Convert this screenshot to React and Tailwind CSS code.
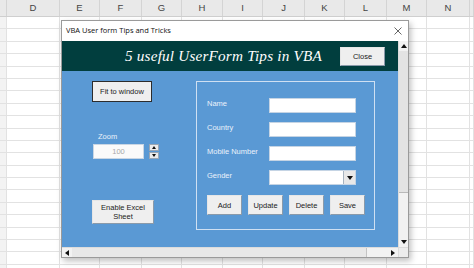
const cols = [
  { key: '', w: 'w-[7px]' },
  { key: 'D', w: 'w-[53px]' },
  { key: 'E', w: 'w-[40px]' },
  { key: 'F', w: 'w-[42px]' },
  { key: 'G', w: 'w-[40px]' },
  { key: 'H', w: 'w-[41px]' },
  { key: 'I', w: 'w-[40px]' },
  { key: 'J', w: 'w-[42px]' },
  { key: 'K', w: 'w-[40px]' },
  { key: 'L', w: 'w-[42px]' },
  { key: 'M', w: 'w-[40px]' },
  { key: 'N', w: 'w-[43px]' },
  { key: ' ', w: 'w-[4px]' },
]

const rows = Array.from({ length: 21 }, (_, i) => i)

const fields = ['Name', 'Country', 'Mobile Number', 'Gender']

export default function App() {
  return (
    <div className="relative w-[474px] h-[268px] overflow-hidden bg-white" style={{ fontFamily: '"Liberation Sans", Arial, sans-serif' }}>
      <Sheet />
      <UserForm />
    </div>
  )
}

function Sheet() {
  return (
    <div className="flex flex-col">
      <div className="flex h-[17px] bg-[#e9e9e9] border-b border-[#cfcfcf]">
        {cols.map((c, i) => (
          <div key={i} className={`${c.w} shrink-0 border-r border-[#d4d4d4] flex items-center justify-center text-[9.5px] text-[#444]`}>
            {c.key}
          </div>
        ))}
      </div>
      {rows.map((r) => (
        <div key={r} className="flex h-[12.4px] shrink-0">
          {cols.map((c, i) => (
            <div key={i} className={`${c.w} shrink-0 border-r border-b border-[#e2e2e2] ${i === 0 ? 'bg-[#f3f3f3]' : ''}`} />
          ))}
        </div>
      ))}
    </div>
  )
}

function WinButton({ children, className = '' }) {
  return (
    <div className={`flex items-center justify-center text-center bg-[#efefef] border border-[#e6e6e6] border-r-[#8a9aaa] border-b-[#8a9aaa] text-[7.5px] leading-[9px] text-[#222] ${className}`}>
      {children}
    </div>
  )
}

function Arrow({ dir }) {
  const pts = {
    up: '0,4 3,0 6,4',
    down: '0,0 3,4 6,0',
    left: '4,0 0,3 4,6',
    right: '0,0 4,3 0,6',
  }
  const horiz = dir === 'left' || dir === 'right'
  return (
    <svg width={horiz ? 4 : 6} height={horiz ? 6 : 4} viewBox={horiz ? '0 0 4 6' : '0 0 6 4'}>
      <polygon points={pts[dir]} fill="#111" />
    </svg>
  )
}

function UserForm() {
  return (
    <div className="absolute left-[61px] top-[20px] w-[348px] h-[238px] bg-[#f0f0f0] border border-[#9a9a9a] shadow-[2px_3px_6px_rgba(0,0,0,0.25)] flex flex-col">
      <div className="h-[20px] shrink-0 bg-white flex items-center justify-between pl-[4px] pr-[6px]">
        <span className="text-[7.5px] text-[#111]" style={{ fontFamily: '"Open Sans", "Liberation Sans", sans-serif' }}>VBA User form Tips and Tricks</span>
        <svg width="8" height="8" viewBox="0 0 8 8">
          <path d="M0.5 0.5 L7.5 7.5 M7.5 0.5 L0.5 7.5" stroke="#555" strokeWidth="0.9" />
        </svg>
      </div>
      <div className="flex flex-1 min-h-0">
        <div className="flex-1 flex flex-col bg-[#5a99d4] min-w-0">
          <div className="h-[30px] shrink-0 bg-[#013e3e] flex items-center">
            <span className="pl-[63px] text-[15.2px] italic text-white tracking-[0.2px]" style={{ fontFamily: '"Liberation Serif", "Times New Roman", serif' }}>
              5 useful UserForm Tips in VBA
            </span>
            <WinButton className="ml-auto mr-[13px] w-[45px] h-[19px]">Close</WinButton>
          </div>
          <div className="flex-1 flex pt-[10px]">
            <div className="w-[134px] shrink-0 flex flex-col pl-[30px]">
              <div className="w-[60px] h-[21px] border border-[#2c2c2c] bg-[#efefef] flex items-center justify-center text-[7.5px] text-[#222]">
                Fit to window
              </div>
              <span className="mt-[30px] ml-[6px] text-[7.5px] leading-[9px] text-[#e9f1fa]">Zoom</span>
              <div className="mt-[3px] ml-[1px] flex items-center gap-[5px]">
                <div className="w-[51px] h-[15px] bg-[#fafafa] border border-[#c9d6e4] flex items-center justify-center text-[7.5px] text-[#a8a8a8]">
                  100
                </div>
                <div className="w-[10px] h-[15px] flex flex-col gap-[1px]">
                  <div className="flex-1 bg-[#ececec] border border-[#9aa7b5] flex items-center justify-center">
                    <svg width="4" height="3" viewBox="0 0 4 3"><polygon points="0,3 2,0 4,3" fill="#111" /></svg>
                  </div>
                  <div className="flex-1 bg-[#ececec] border border-[#9aa7b5] flex items-center justify-center">
                    <svg width="4" height="3" viewBox="0 0 4 3"><polygon points="0,0 2,3 4,0" fill="#111" /></svg>
                  </div>
                </div>
              </div>
              <WinButton className="mt-[41px] w-[62px] h-[24px]">
                Enable Excel
                <br />
                Sheet
              </WinButton>
            </div>
            <div className="w-[179px] h-[149px] shrink-0 border border-[#cfe0f2] pl-[10px] pt-[16px] flex flex-col">
              {fields.map((f) => (
                <div key={f} className="flex items-start h-[24px]">
                  <span className="w-[62px] pt-[1px] text-[7.5px] leading-[9px] text-[#eaf2fb]">{f}</span>
                  <div className="w-[87px] h-[15px] bg-white border border-[#c5d4e4] flex justify-end">
                    {f === 'Gender' && (
                      <div className="w-[12px] h-full bg-[#e8e8e8] border-l border-[#a7b3c0] flex items-center justify-center">
                        <Arrow dir="down" />
                      </div>
                    )}
                  </div>
                </div>
              ))}
              <div className="mt-[1px] flex gap-[6px]">
                {['Add', 'Update', 'Delete', 'Save'].map((b) => (
                  <WinButton key={b} className="w-[35px] h-[20px]">{b}</WinButton>
                ))}
              </div>
            </div>
          </div>
        </div>
        <div className="w-[10px] shrink-0 flex flex-col bg-[#f2f2f2] border-l border-[#dcdcdc]">
          <div className="h-[10px] flex items-center justify-center"><Arrow dir="up" /></div>
          <div className="h-[142px] bg-[#e3e3e3] border-b border-[#b9b9b9]" />
          <div className="flex-1" />
          <div className="h-[10px] flex items-center justify-center"><Arrow dir="down" /></div>
        </div>
      </div>
      <div className="h-[10px] shrink-0 flex bg-[#f2f2f2] border-t border-[#dcdcdc]">
        <div className="w-[10px] flex items-center justify-center"><Arrow dir="left" /></div>
        <div className="w-[295px] bg-[#e8e8e8] border-r border-[#c4c4c4]" />
        <div className="flex-1" />
        <div className="w-[10px] flex items-center justify-center"><Arrow dir="right" /></div>
        <div className="w-[10px] bg-[#ececec] border-l border-[#dcdcdc]" />
      </div>
    </div>
  )
}
